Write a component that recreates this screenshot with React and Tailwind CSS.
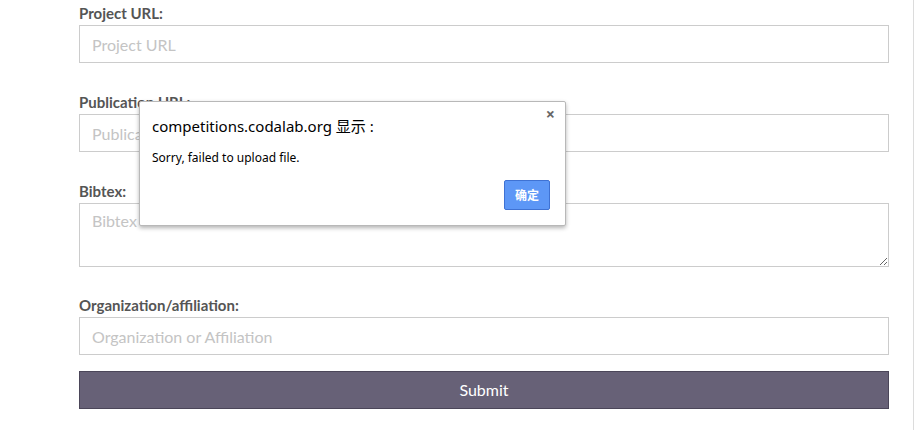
import React from "react";

const Field = ({ label, placeholder, className = "", area = false }) => (
  <div className={className}>
    <label className="block text-[15px] leading-[20px] font-bold text-[#555]">{label}</label>
    {area ? (
      <textarea
        placeholder={placeholder}
        className="mt-[2px] block w-full h-[64px] border border-[#ccc] px-3 py-[6px] text-[16px] leading-[22px] text-[#555] placeholder:text-[#c4c4c4] outline-none"
      />
    ) : (
      <input
        placeholder={placeholder}
        className="mt-[2px] block w-full h-[38px] border border-[#ccc] px-3 text-[16px] text-[#555] placeholder:text-[#c4c4c4] outline-none"
      />
    )}
  </div>
);

const App = () => {
  return (
    <div className="relative w-[916px] h-[430px] overflow-hidden bg-white font-['Lato','Noto_Sans',sans-serif]">
      <div className="flex h-full">
        <div className="w-[913px] pl-[79px] pr-[24px] pt-[3px]">
          <Field label="Project URL:" placeholder="Project URL" />
          <Field label="Publication URL:" placeholder="Publication URL" className="mt-[29px]" />
          <Field label="Bibtex:" placeholder="Bibtex" area className="mt-[29px]" />
          <Field label="Organization/affiliation:" placeholder="Organization or Affiliation" className="mt-[28px]" />
          <button className="mt-[16px] block w-full h-[38px] bg-[#676177] border border-[#4b4659] text-white text-[16px]">
            Submit
          </button>
          <p className="mt-[17px] pl-[130px] text-[14px] leading-[20px] text-[#555]">
            You can edit these details later in your profile settings.
          </p>
        </div>
        <div className="w-[1px] h-full bg-[#dcdcdc]" />
      </div>

      {/* browser alert */}
      <div className="absolute left-[139px] top-[101px] w-[427px] h-[125px] bg-white border border-[#b8b8b8] rounded-[2px] shadow-[0_2px_4px_rgba(0,0,0,0.3)] font-['Noto_Sans','Noto_Sans_CJK_SC',sans-serif]">
        <span className="absolute right-[10px] top-[4px] text-[#666] text-[16px] font-bold leading-none">×</span>
        <div className="pl-[12px] pt-[14px]">
          <div className="text-[15px] leading-[20px] text-black">competitions.codalab.org 显示 :</div>
          <div className="mt-[14px] text-[12px] leading-[16px] text-black">Sorry, failed to upload file.</div>
        </div>
        <div className="flex justify-end pr-[15px] mt-[14px]">
          <button className="w-[46px] h-[30px] bg-[#5d97f6] border border-[#3f72d3] rounded-[2px] text-white text-[12px] font-bold font-['Noto_Sans_CJK_SC',sans-serif]">
            确定
          </button>
        </div>
      </div>
    </div>
  );
};

export default App;
